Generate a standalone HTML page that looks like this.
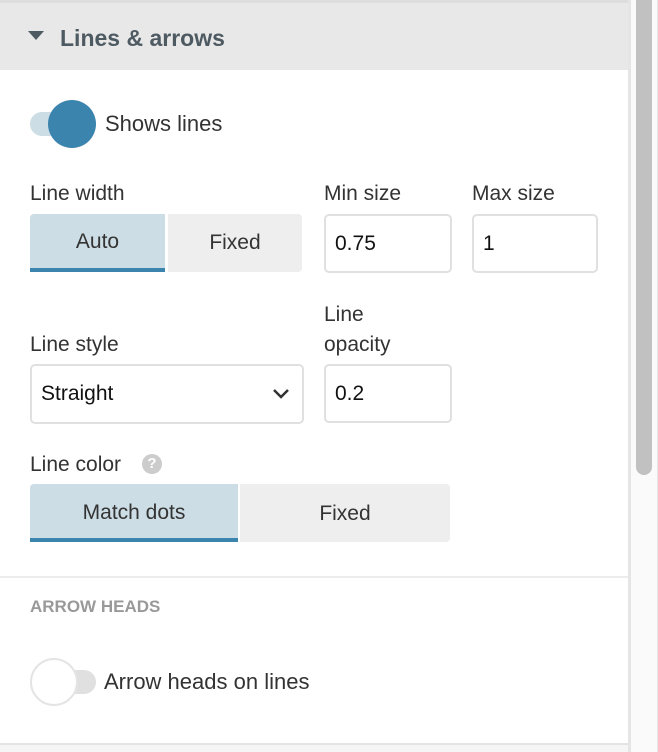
<!DOCTYPE html>
<html><head><meta charset="utf-8"><style>
*{box-sizing:border-box;margin:0;padding:0}
body{width:658px;height:752px;overflow:hidden;background:#fff;font-family:"Liberation Sans",sans-serif;color:#333;position:relative}
.a{position:absolute}
.lbl{font-size:21px;color:#333;line-height:24px}
.btn{position:absolute;background:#eee;font-size:21px;text-align:center;color:#333;border-radius:4px}
.on{background:#cddde5;border-bottom:4px solid #3a84ad;border-radius:4px 0 0 0}
.inp{position:absolute;border:2px solid #e0e0e0;border-radius:5px;background:#fff;font-size:21px;color:#111;padding-left:9px}
</style></head><body>
<div class="a" style="left:0;top:0;width:628px;height:3px;background:#ddd"></div>
<div class="a" style="left:0;top:3px;width:628px;height:67px;background:#e8e8e8"></div>
<div class="a" style="left:28px;top:31px;width:0;height:0;border-left:8px solid transparent;border-right:8px solid transparent;border-top:9px solid #4e5a62"></div>
<div class="a" style="left:60px;top:23px;font-size:23px;font-weight:bold;color:#4e5a62;line-height:30px">Lines &amp; arrows</div>

<div class="a" style="left:30px;top:112px;width:40px;height:24px;border-radius:12px;background:#cddde5"></div>
<div class="a" style="left:48px;top:100px;width:48px;height:48px;border-radius:50%;background:#3a84ad"></div>
<div class="a lbl" style="left:105px;top:112px;font-size:22px">Shows lines</div>

<div class="a lbl" style="left:30px;top:182px">Line width</div>
<div class="a lbl" style="left:324px;top:182px">Min size</div>
<div class="a lbl" style="left:472px;top:182px">Max size</div>
<div class="btn on" style="left:30px;top:214px;width:135px;height:58px;line-height:56px">Auto</div>
<div class="btn" style="left:168px;top:214px;width:134px;height:58px;line-height:58px;border-radius:0 4px 4px 0">Fixed</div>
<div class="inp" style="left:324px;top:214px;width:128px;height:59px;line-height:55px">0.75</div>
<div class="inp" style="left:472px;top:214px;width:126px;height:59px;line-height:55px">1</div>

<div class="a lbl" style="left:324px;top:300px;line-height:30px">Line<br>opacity</div>
<div class="a lbl" style="left:30px;top:333px">Line style</div>
<div class="inp" style="left:30px;top:364px;width:274px;height:60px;line-height:56px">Straight
<svg class="a" style="right:12px;top:22px" width="18" height="12" viewBox="0 0 18 12"><path d="M2 2 L9 9 L16 2" fill="none" stroke="#333" stroke-width="2.5"/></svg></div>
<div class="inp" style="left:324px;top:364px;width:128px;height:59px;line-height:55px">0.2</div>

<div class="a lbl" style="left:30px;top:453px">Line color</div>
<div class="a" style="left:142px;top:454px;width:20px;height:20px;border-radius:50%;background:#ccc;color:#fff;font-size:15px;font-weight:bold;text-align:center;line-height:20px">?</div>
<div class="btn on" style="left:30px;top:484px;width:208px;height:58px;line-height:58px">Match dots</div>
<div class="btn" style="left:240px;top:484px;width:210px;height:58px;line-height:60px;border-radius:0 4px 4px 0">Fixed</div>

<div class="a" style="left:0;top:576px;width:628px;height:2px;background:#ececec"></div>
<div class="a" style="left:30px;top:597px;font-size:17px;font-weight:bold;color:#999;line-height:20px">ARROW HEADS</div>
<div class="a" style="left:54px;top:670px;width:42px;height:24px;border-radius:12px;background:#e0e0e0"></div>
<div class="a" style="left:30px;top:658px;width:48px;height:48px;border-radius:50%;background:#fff;border:2px solid #e4e4e4"></div>
<div class="a lbl" style="left:104px;top:670px;font-size:22px">Arrow heads on lines</div>
<div class="a" style="left:0;top:743px;width:628px;height:2px;background:#e4e4e4"></div>
<div class="a" style="left:0;top:745px;width:628px;height:7px;background:#f5f5f5"></div>

<div class="a" style="left:628px;top:0;width:3px;height:752px;background:#e5e5e5"></div>
<div class="a" style="left:631px;top:0;width:26px;height:752px;background:#fafafa"></div>
<div class="a" style="left:657px;top:0;width:1px;height:752px;background:#e5e5e5"></div>
<div class="a" style="left:636px;top:-10px;width:16px;height:485px;border-radius:8px;background:#c1c1c1"></div>
</body></html>
